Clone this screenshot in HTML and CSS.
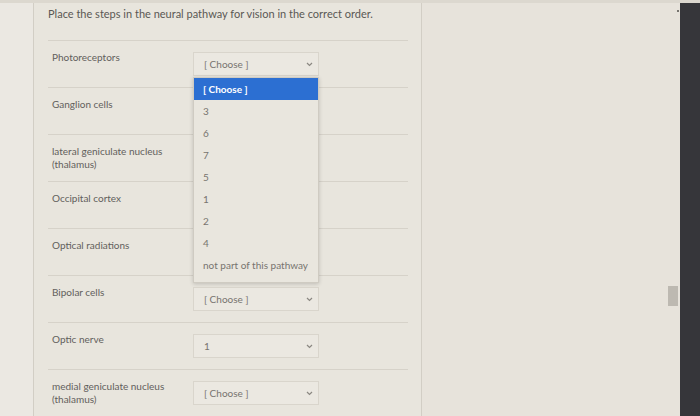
FILE: index.html
```html
<!DOCTYPE html>
<html lang="en">
<head>
  <meta charset="UTF-8" />
  <title>Matching question</title>
  <link rel="stylesheet" href="styles.css">
</head>
<body>
  <div class="screen">
    <div class="gutter"></div>
    <div class="question">
      <p class="prompt">Place the steps in the neural pathway for vision in the correct order.</p>

      <div class="row">
        <div class="label">Photoreceptors</div>
        <div class="pick open">
          <div class="select"><span>[ Choose ]</span><svg class="chev" width="7" height="5" viewBox="0 0 7 5"><polyline points="1,1 3.5,3.5 6,1" fill="none" stroke="#8b8882" stroke-width="1.2"/></svg></div>
          <ul class="menu">
            <li class="active">[ Choose ]</li>
            <li>3</li>
            <li>6</li>
            <li>7</li>
            <li>5</li>
            <li>1</li>
            <li>2</li>
            <li>4</li>
            <li>not part of this pathway</li>
          </ul>
        </div>
      </div>
      <div class="row">
        <div class="label">Ganglion cells</div>
      </div>
      <div class="row">
        <div class="label">lateral geniculate nucleus<br>(thalamus)</div>
      </div>
      <div class="row">
        <div class="label">Occipital cortex</div>
      </div>
      <div class="row">
        <div class="label">Optical radiations</div>
      </div>
      <div class="row">
        <div class="label">Bipolar cells</div>
        <div class="pick">
          <div class="select"><span>[ Choose ]</span><svg class="chev" width="7" height="5" viewBox="0 0 7 5"><polyline points="1,1 3.5,3.5 6,1" fill="none" stroke="#8b8882" stroke-width="1.2"/></svg></div>
        </div>
      </div>
      <div class="row">
        <div class="label">Optic nerve</div>
        <div class="pick">
          <div class="select"><span>1</span><svg class="chev" width="7" height="5" viewBox="0 0 7 5"><polyline points="1,1 3.5,3.5 6,1" fill="none" stroke="#8b8882" stroke-width="1.2"/></svg></div>
        </div>
      </div>
      <div class="row">
        <div class="label">medial geniculate nucleus<br>(thalamus)</div>
        <div class="pick">
          <div class="select"><span>[ Choose ]</span><svg class="chev" width="7" height="5" viewBox="0 0 7 5"><polyline points="1,1 3.5,3.5 6,1" fill="none" stroke="#8b8882" stroke-width="1.2"/></svg></div>
        </div>
      </div>
    </div>
    <div class="side">
      <div class="track">
        <div class="arrow"></div>
        <div class="thumb"></div>
      </div>
    </div>
    <div class="edge"></div>
  </div>
</body>
</html>
```

FILE: styles.css
```css
body {
  margin: 0;
  background: #e6e2da;
  font-family: Lato, "Open Sans", sans-serif;
  color: #62605c;
  overflow: hidden;
}
.screen {
  display: flex;
  height: 416px;
  border-top: 3px solid #dcd8cf;
  box-sizing: border-box;
}
.gutter {
  width: 33px;
  background: #ebe8e2;
  border-right: 1px solid #d2cec5;
}
.question {
  width: 360px;
  padding: 0 13px 0 14px;
  border-right: 1px solid #d2cec5;
  background: #e8e5dd;
}
.prompt {
  margin: 0;
  height: 37px;
  padding-top: 4px;
  box-sizing: border-box;
  font-size: 11px;
  color: #5a5854;
}
.row {
  display: flex;
  height: 47px;
  border-top: 1px solid #d6d2c9;
  box-sizing: border-box;
}
.label {
  width: 141px;
  padding: 10px 0 0 4px;
  font-size: 10px;
  line-height: 13px;
}
.pick {
  position: relative;
  margin-top: 11px;
}
.select {
  width: 126px;
  height: 24px;
  box-sizing: border-box;
  display: flex;
  justify-content: space-between;
  align-items: center;
  padding: 0 5px 0 10px;
  background: #ebe8e1;
  border: 1px solid #d9d5cc;
  font-size: 10px;
  color: #77746f;
}
.menu {
  position: absolute;
  top: 25px;
  left: 0;
  width: 126px;
  margin: 0;
  padding: 0 0 6px;
  list-style: none;
  background: #e9e6de;
  border: 1px solid #cfcbc2;
  box-sizing: border-box;
  box-shadow: 0 1px 4px rgba(0, 0, 0, 0.18);
  font-size: 10px;
  color: #77746f;
}
.menu li {
  height: 22px;
  line-height: 22px;
  padding-left: 9px;
}
.menu li.active {
  background: #2c6fd2;
  color: #fff;
  font-weight: bold;
}
.side {
  flex: 1;
  display: flex;
  justify-content: flex-end;
  background: #e7e3db;
}
.track {
  width: 12px;
}
.arrow {
  width: 2px;
  height: 2px;
  margin: 7px 0 0 9px;
  background: #77746f;
}
.thumb {
  width: 10px;
  height: 20px;
  margin-top: 274px;
  background: #bdb9b1;
}
.edge {
  width: 20px;
  background: #36363a;
}
```
